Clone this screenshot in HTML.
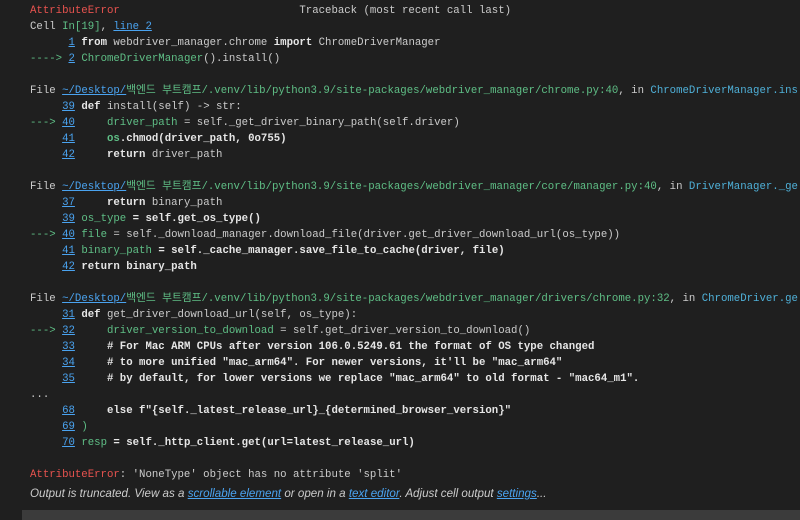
<!DOCTYPE html>
<html><head><meta charset="utf-8"><style>
html,body{margin:0;padding:0;background:#1f1f1f;width:800px;height:520px;overflow:hidden}
.wrap{position:absolute;left:0;top:0;width:800px;height:520px;overflow:hidden}
pre{position:absolute;left:30px;top:3px;margin:0;font-family:"Liberation Mono","Noto Sans CJK KR",monospace;font-size:10.7px;line-height:16px;color:#cccccc;white-space:pre}
.r{color:#e8534f}.g{color:#5fbf86}.u{color:#4aa3f0;text-decoration:underline}.c{color:#4fb0d8}.b{font-weight:bold;color:#e6e6e6}
.foot{position:absolute;left:30px;top:487px;font-family:"Liberation Sans",sans-serif;font-style:italic;font-size:11.6px;color:#cccccc;white-space:nowrap}
.foot a{color:#4aa3f0;text-decoration:underline}
.sb{position:absolute;left:22px;top:510px;width:778px;height:10px;background:#3b3b3b}
</style></head><body><div class="wrap">
<pre><span class="r">AttributeError</span>                            Traceback (most recent call last)
Cell <span class="g">In[19]</span>, <span class="u">line 2</span>
      <span class="u">1</span> <span class="b">from</span> webdriver_manager.chrome <span class="b">import</span> ChromeDriverManager
<span class="g">----&gt; </span><span class="u">2</span> <span class="g">ChromeDriverManager</span>().install()

File <span class="u">~/Desktop/</span><span class="g">백엔드 부트캠프/.venv/lib/python3.9/site-packages/webdriver_manager/chrome.py:40</span>, in <span class="c">ChromeDriverManager.ins</span>
     <span class="u">39</span> <span class="b">def</span> install(self) -&gt; str:
<span class="g">---&gt; </span><span class="u">40</span>     <span class="g">driver_path</span> = self._get_driver_binary_path(self.driver)
     <span class="u">41</span>     <span class="b"><span class="g">os</span>.chmod(driver_path, 0o755)</span>
     <span class="u">42</span>     <span class="b">return</span> driver_path

File <span class="u">~/Desktop/</span><span class="g">백엔드 부트캠프/.venv/lib/python3.9/site-packages/webdriver_manager/core/manager.py:40</span>, in <span class="c">DriverManager._ge</span>
     <span class="u">37</span>     <span class="b">return</span> binary_path
     <span class="u">39</span> <span class="g">os_type</span> <span class="b">= self.get_os_type()</span>
<span class="g">---&gt; </span><span class="u">40</span> <span class="g">file</span> = self._download_manager.download_file(driver.get_driver_download_url(os_type))
     <span class="u">41</span> <span class="g">binary_path</span> <span class="b">= self._cache_manager.save_file_to_cache(driver, file)</span>
     <span class="u">42</span> <span class="b">return binary_path</span>

File <span class="u">~/Desktop/</span><span class="g">백엔드 부트캠프/.venv/lib/python3.9/site-packages/webdriver_manager/drivers/chrome.py:32</span>, in <span class="c">ChromeDriver.ge</span>
     <span class="u">31</span> <span class="b">def</span> get_driver_download_url(self, os_type):
<span class="g">---&gt; </span><span class="u">32</span>     <span class="g">driver_version_to_download</span> = self.get_driver_version_to_download()
     <span class="u">33</span>     <span class="b"># For Mac ARM CPUs after version 106.0.5249.61 the format of OS type changed</span>
     <span class="u">34</span>     <span class="b"># to more unified "mac_arm64". For newer versions, it'll be "mac_arm64"</span>
     <span class="u">35</span>     <span class="b"># by default, for lower versions we replace "mac_arm64" to old format - "mac64_m1".</span>
...
     <span class="u">68</span>     <span class="b">else f"{self._latest_release_url}_{determined_browser_version}"</span>
     <span class="u">69</span> <span class="g">)</span>
     <span class="u">70</span> <span class="g">resp</span> <span class="b">= self._http_client.get(url=latest_release_url)</span>

<span class="r">AttributeError</span>: 'NoneType' object has no attribute 'split'</pre>
<div class="foot">Output is truncated. View as a <a>scrollable element</a> or open in a <a>text editor</a>. Adjust cell output <a>settings</a>...</div>
<div class="sb"></div>
</div></body></html>
